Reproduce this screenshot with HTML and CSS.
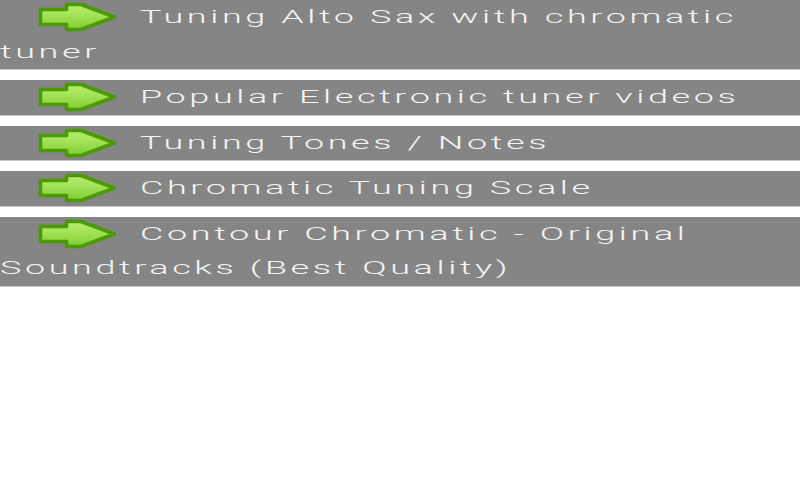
FILE: index.html
```html
<!DOCTYPE html>
<html>
<head>
<meta charset="utf-8">
<link rel="stylesheet" href="styles.css">
</head>
<body>
<svg class="defs" width="0" height="0">
  <defs>
    <linearGradient id="g" x1="0" y1="0" x2="0" y2="1">
      <stop offset="0" stop-color="#b8ee72"/>
      <stop offset="0.5" stop-color="#9ee054"/>
      <stop offset="1" stop-color="#80cc34"/>
    </linearGradient>
    <symbol id="arrow" viewBox="0 0 79 30" preserveAspectRatio="none">
      <path d="M2.5 7.5 H28.5 V2.5 H43 L76.5 15 L43 27.5 H28.5 V22.5 H2.5 Z" fill="url(#g)" stroke="#4a9a02" stroke-width="3.6" stroke-linejoin="round"/>
    </symbol>
  </defs>
</svg>
<ul class="list">
  <li class="item"><p class="label"><svg class="arrow"><use href="#arrow"/></svg>Tuning Alto Sax with chromatic tuner</p></li>
  <li class="item"><p class="label"><svg class="arrow"><use href="#arrow"/></svg>Popular Electronic tuner videos</p></li>
  <li class="item"><p class="label"><svg class="arrow"><use href="#arrow"/></svg>Tuning Tones / Notes</p></li>
  <li class="item"><p class="label"><svg class="arrow"><use href="#arrow"/></svg>Chromatic Tuning Scale</p></li>
  <li class="item"><p class="label"><svg class="arrow"><use href="#arrow"/></svg>Contour Chromatic - Original Soundtracks (Best Quality)</p></li>
</ul>
</body>
</html>
```
FILE: styles.css
```css
html, body {
  margin: 0;
  padding: 0;
  background: #ffffff;
  overflow: hidden;
}
.defs {
  position: absolute;
  width: 0;
  height: 0;
}
.list {
  list-style: none;
  margin: 0;
  padding: 0;
}
.item {
  background: #858585;
  border-bottom: 1px solid #c9c9c9;
  margin-bottom: 10px;
  overflow: hidden;
}
.label {
  margin: 0;
  width: 400px;
  transform: scaleX(2);
  transform-origin: 0 0;
  font-family: Roboto, "Liberation Sans", sans-serif;
  font-weight: 300;
  font-size: 18px;
  letter-spacing: 1.8px;
  line-height: 34.5px;
  color: #f4f4f4;
}
.arrow {
  display: inline-block;
  width: 39.5px;
  height: 30px;
  margin-left: 18.5px;
  margin-right: 12px;
  vertical-align: -9px;
}
```
